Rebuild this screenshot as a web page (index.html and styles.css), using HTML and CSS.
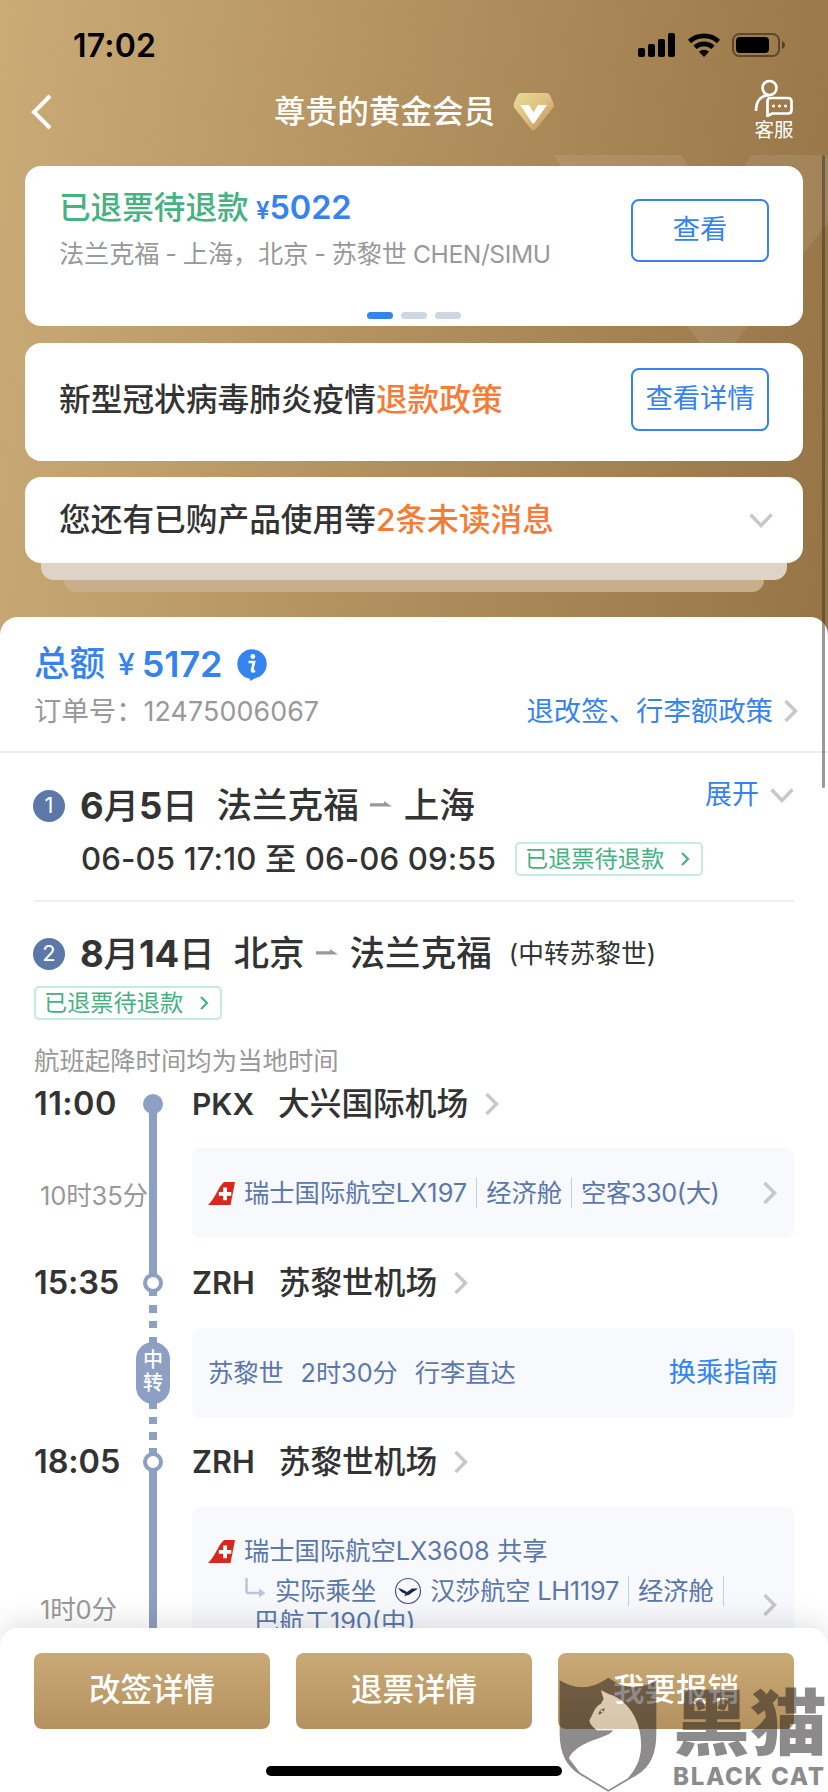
FILE: index.html
```html
<!DOCTYPE html>
<html lang="zh-CN">
<head>
<meta charset="utf-8">
<title>订单详情</title>
<link rel="stylesheet" href="styles.css">
</head>
<body>
<svg class="defs" width="0" height="0">
  <symbol id="right" viewBox="0 0 14 22"><path d="M1.5 1L11.5 11L1.5 21" fill="none" stroke="#c8c8c8" stroke-width="3.500"/></symbol>
  <symbol id="down" viewBox="0 0 24 15"><path d="M1.5 1.5L12 12.5L22.5 1.5" fill="none" stroke="#c8c8c8" stroke-width="3.500"/></symbol>
  <symbol id="tagright" viewBox="0 0 9 14"><path d="M1 1L7 7L1 13" fill="none" stroke="#45b280" stroke-width="2.200"/></symbol>
  <symbol id="arrow" viewBox="0 0 22 6"><path d="M0 2.2H14V0L22 5.6H0Z" fill="#999"/></symbol>
  <symbol id="swiss" viewBox="0 0 27 23"><path d="M16 0H27L22.500 23H0C7 17 10 5 16 0Z" fill="#d8271c"/><path d="M15.2 5.5H19V10H23.3V13.8H19V18.3H15.2V13.8H10.8V10H15.2Z" fill="#fff"/></symbol>
</svg>
<div class="screen">
  <svg class="bgv" width="275" height="188" viewBox="0 0 275 188"><path d="M0 0H129L163 67L198 0H275V67L182 188H147Z" fill="#fff" fill-opacity=".09"/></svg>
  <div class="status">
    <span class="clock">17:02</span>
    <svg width="148" height="26" viewBox="0 0 148 26">
      <rect x="0" y="16" width="7" height="9" rx="2"/><rect x="10" y="12" width="7" height="13" rx="2"/><rect x="20" y="7" width="7" height="18" rx="2"/><rect x="30" y="1" width="7" height="24" rx="2"/>
      <g fill="none" stroke="#000" stroke-width="4.6"><path d="M51.5 9.5C59.500 2 72.500 2 80.500 9.500"/><path d="M57 15.300C62 10.700 70 10.700 75 15.300"/></g>
      <path d="M61 19.700C64 17 68 17 71 19.700L66 25Z"/>
      <rect x="95" y="2" width="46" height="22" rx="6.500" fill="none" stroke="#000" stroke-opacity=".42" stroke-width="2"/>
      <rect x="98" y="5" width="33" height="16" rx="4"/><path d="M144 9V17C148 15.500 148 10.500 144 9Z" fill-opacity=".45"/>
    </svg>
  </div>
  <header class="nav">
    <svg width="22" height="36" viewBox="0 0 22 36"><path d="M19 2L3 18L19 34" fill="none" stroke="#fff" stroke-width="4"/></svg>
    <h1>尊贵的黄金会员</h1>
    <svg class="gem" width="42" height="40" viewBox="0 0 42 40">
      <defs><linearGradient id="gold" x1="0" y1="0" x2="1" y2="1"><stop offset="0" stop-color="#eadb94"/><stop offset=".5" stop-color="#dfc083"/><stop offset="1" stop-color="#bd8750"/></linearGradient></defs>
      <path d="M8 1H33Q36 1 37 3L40.500 11Q41.500 14 40 16L23 37Q20.500 40 18 37L1.500 16Q0 14 1 11L4.500 3Q5.500 1 8 1Z" fill="url(#gold)"/>
      <path d="M7 13H16L20.500 20.500L25 13H34L31 17L21 31.500H19.500L10 17Z" fill="#fff"/>
    </svg>
    <div class="service">
      <svg width="40" height="38" viewBox="0 0 40 38" fill="none" stroke="#fff" stroke-width="2.700"><circle cx="15.500" cy="9" r="7"/><path d="M2 32C2 21 8 16 15 16.500"/><path d="M16.500 19H34Q37.500 19 37.500 22.500V31Q37.500 34.500 34 34.500H18L13.500 37V22.500Q13.500 19 16.500 19Z"/><g fill="#fff" stroke="none"><circle cx="19.500" cy="27" r="1.500"/><circle cx="25.500" cy="27" r="1.500"/><circle cx="31.500" cy="27" r="1.500"/></g></svg>
      <span>客服</span>
    </div>
  </header>
  <section class="notices">
    <div class="card refund">
      <div class="row">
        <div>
          <div class="headline"><span class="green">已退票待退款</span> <b class="price"><small>¥</small>5022</b></div>
          <div class="route">法兰克福 - 上海，北京 - 苏黎世 <span class="pax">CHEN/SIMU</span></div>
        </div>
        <a class="btn">查看</a>
      </div>
      <div class="dots"><i class="on"></i><i></i><i></i></div>
    </div>
    <div class="card policy"><div class="msg">新型冠状病毒肺炎疫情<em>退款政策</em></div><a class="btn">查看详情</a></div>
    <div class="card unread"><div class="msg">您还有已购产品使用等<em>2条未读消息</em></div><svg width="24" height="15"><use href="#down"/></svg></div>
    <div class="under one"></div>
    <div class="under two"></div>
  </section>
  <main class="sheet">
    <div class="summary">
      <div class="total"><span>总额</span><span class="yen">¥</span><b>5172</b>
        <svg width="30" height="33" viewBox="0 0 30 33"><circle cx="15" cy="15" r="14.700" fill="#3583ee"/><path d="M12 28L13.500 32L20 28Z" fill="#3583ee"/><circle cx="15.800" cy="7.500" r="2.400" fill="#fff"/><path d="M11.500 13H17L15 21.500Q15 23 18 21.800" fill="none" stroke="#fff" stroke-width="2.700"/></svg>
      </div>
      <div class="order"><span class="no">订单号：<span class="digits">12475006067</span></span><a>退改签、行李额政策</a><svg width="14" height="22"><use href="#right"/></svg></div>
    </div>
    <section class="trip first">
      <div class="leg"><span class="badge">1</span><span class="date"><b>6</b>月<b>5</b>日</span><span class="city">法兰克福</span><svg class="arr" width="22" height="6"><use href="#arrow"/></svg><span>上海</span><a class="more">展开<svg width="24" height="15"><use href="#down"/></svg></a></div>
      <div class="when"><span class="time">06-05 17:10 至 06-06 09:55</span><span class="tag">已退票待退款<svg width="9" height="14"><use href="#tagright"/></svg></span></div>
    </section>
    <section class="trip second">
      <div class="leg"><span class="badge">2</span><span class="date"><b>8</b>月<b>14</b>日</span><span class="city">北京</span><svg class="arr" width="22" height="6"><use href="#arrow"/></svg><span>法兰克福</span><span class="via">(中转苏黎世)</span></div>
      <span class="tag">已退票待退款<svg width="9" height="14"><use href="#tagright"/></svg></span>
      <div class="local">航班起降时间均为当地时间</div>
    </section>
    <section class="timeline">
      <div class="stop start"><b class="hour">11:00</b><div class="track"><i class="dot"></i></div><div class="port"><b>PKX</b><span>大兴国际机场</span><svg width="14" height="22"><use href="#right"/></svg></div></div>
      <div class="flight"><span class="dur">10时35分</span><div class="track"></div>
        <div class="box"><svg width="27" height="23"><use href="#swiss"/></svg><span class="name">瑞士国际航空LX197</span><span class="sep">经济舱</span><span class="sep jet">空客330(大)</span><svg class="go" width="14" height="22"><use href="#right"/></svg></div></div>
      <div class="stop arrive"><b class="hour">15:35</b><div class="track"><i class="dot open"></i></div><div class="port"><b>ZRH</b><span>苏黎世机场</span><svg width="14" height="22"><use href="#right"/></svg></div></div>
      <div class="flight transfer"><span></span><div class="track"><span class="pill">中<br>转</span></div>
        <div class="box"><span class="tr">苏黎世</span><span class="tr">2时30分</span><span>行李直达</span><a class="go">换乘指南</a></div></div>
      <div class="stop depart"><b class="hour">18:05</b><div class="track"><i class="dot open"></i></div><div class="port"><b>ZRH</b><span>苏黎世机场</span><svg width="14" height="22"><use href="#right"/></svg></div></div>
      <div class="flight shared"><span class="dur">1时0分</span><div class="track"></div>
        <div class="box">
          <div class="lines">
            <div class="line"><svg width="27" height="23"><use href="#swiss"/></svg><span class="name">瑞士国际航空LX3608 共享</span></div>
            <div class="line actual"><svg width="21" height="20" viewBox="0 0 21 20"><path d="M1.500 0V13Q1.500 15 3.500 15H16" fill="none" stroke="#b9c5da" stroke-width="2.500"/><path d="M14 10.500L20.500 15L14 19.500Z" fill="#b9c5da"/></svg><span class="ride">实际乘坐</span>
              <svg width="28" height="28" viewBox="0 0 28 28"><circle cx="14" cy="14" r="12.500" fill="none" stroke="#4a5487" stroke-width="1.200"/><path d="M4 11C8 12 10 13 13 15L18 11.500H24L22 13L18 15.500C16 18 13 18 10 19.500L11.500 17C8 16 6 14 4 11Z" fill="#1b2754"/></svg>
              <span class="name lh">汉莎航空 LH1197</span><span class="sep">经济舱</span><span class="sep end"></span></div>
            <div class="line plane">巴航工190(中)</div>
          </div>
          <svg class="go" width="14" height="22"><use href="#right"/></svg>
        </div></div>
    </section>
  </main>
  <div class="scrollbar"></div>
  <footer class="bar">
    <div class="actions"><button>改签详情</button><button>退票详情</button><button>我要报销</button></div>
    <div class="home"></div>
  </footer>
  <div class="mark">
    <svg width="98" height="116" viewBox="56 170 294 348">
      <path fill-rule="evenodd" fill="#1e181c" fill-opacity=".5" d="M58 180Q130 225 204 172Q278 225 348 180V340C348 400 330 440 290 464L204 514L120 464C80 440 58 400 58 340ZM182 210L206 222C260 237 305 300 302 380C300 425 282 450 262 474L204 508L118 456L86 414C100 380 150 362 180 352C200 346 215 338 218 330L170 330C155 320 145 305 148 298C160 280 160 262 182 250L190 236Z"/>
      <path fill="#fff" fill-opacity=".48" d="M182 210L206 222C260 237 305 300 302 380C300 425 282 450 262 474L204 508L118 456L86 414C100 380 150 362 180 352C200 346 215 338 218 330L170 330C155 320 145 305 148 298C160 280 160 262 182 250L190 236Z"/>
      <path d="M174 283Q176 267 193 264Q192 280 174 283Z" fill="#6a563e"/><circle cx="185" cy="273" r="4" fill="#dac8ae"/>
    </svg>
    <div class="words"><div class="zh">黑猫</div><div class="en">BLACK CAT</div></div>
  </div>
</div>
</body>
</html>
```
FILE: styles.css
```css
* { box-sizing: border-box; }
body { margin: 0; font-family: Inter, "Noto Sans CJK SC", sans-serif; color: #333; }
svg { display: block; flex: none; }
.defs { position: absolute; }
b { font-weight: 600; }
em { font-style: normal; color: #f57c37; }
a { color: #3583ee; }
.screen { position: relative; width: 828px; height: 1792px; overflow: hidden; background: linear-gradient(97deg, #caab76 0, #b39260 45%, #967446 100%) 0 0 / 100% 650px no-repeat #fff; }
.bgv { position: absolute; left: 553px; top: 155px; }
.status { position: relative; height: 80px; padding: 32px 42px 0 73px; display: flex; justify-content: space-between; color: #000; }
.clock { font-size: 32px; font-weight: 600; line-height: 28px; letter-spacing: .2px; }
.nav { height: 86px; padding: 0 34px 22px 31px; display: flex; align-items: center; color: #fff; position: relative; }
.nav h1 { margin: 0 0 0 221px; font-size: 31.600px; font-weight: 500; line-height: 40px; white-space: nowrap; }
.gem { margin-left: 18px; }
.service { margin-left: auto; margin-top: -3px; display: flex; flex-direction: column; align-items: center; font-size: 19.500px; line-height: 26px; }
.notices { position: relative; padding: 0 25px; height: 451px; }
.card { background: #fff; border-radius: 16px; }
.refund { height: 160px; margin-bottom: 17px; padding: 22px 34px 0 34px; }
.row { display: flex; justify-content: space-between; height: 124px; }
.headline { font-size: 31.600px; line-height: 40px; white-space: nowrap; font-weight: 500; word-spacing: -1px; }
.green { color: #45b280; }
.price { color: #3583ee; font-size: 32.500px; letter-spacing: -.1px; }
.price small { font-size: 24px; }
.route { margin-top: 3px; font-size: 25.200px; line-height: 40px; color: #999; white-space: nowrap; letter-spacing: -.1px; word-spacing: -1px; }
.pax { font-size: 24.600px; letter-spacing: -.4px; }
.btn { width: 138px; height: 63px; flex: none; border: 2px solid #3583ee; border-radius: 8px; display: flex; align-items: center; justify-content: center; font-size: 27.300px; line-height: 30px; padding-bottom: 1px; }
.row .btn { margin-top: 11px; }
.dots { display: flex; justify-content: center; gap: 8px; }
.dots i { width: 26px; height: 7px; border-radius: 4px; background: #ced6e3; }
.dots .on { background: #3583ee; }
.policy { height: 118px; margin-bottom: 16px; padding: 25px 34px 0 34px; display: flex; justify-content: space-between; }
.msg { font-size: 31.700px; font-weight: 500; line-height: 64px; white-space: nowrap; }
.unread { height: 86px; padding: 0 30px 0 34px; display: flex; align-items: center; justify-content: space-between; }
.under { margin: 0 16px; height: 17px; background: #ddd4c6; border-radius: 0 0 13px 13px; }
.two { margin: 0 39px; height: 12px; background: #c8af8a; }
.sheet { position: relative; background: #fff; border-radius: 18px 18px 0 0; height: 1175px; }
.summary { height: 136px; border-bottom: 2px solid #eee; padding: 27px 30px 0 34px; }
.total { height: 40px; display: flex; align-items: center; color: #3583ee; font-size: 35.500px; font-weight: 500; line-height: 40px; }
.total b { font-size: 36px; letter-spacing: -.1px; }
.yen { font-size: 30px; margin: 0 7px 0 13px; }
.total svg { margin: 3px 0 0 15px; }
.order { height: 54px; display: flex; align-items: center; font-size: 27.400px; line-height: 40px; color: #999; }
.no { flex: 1; white-space: nowrap; }
.digits { font-size: 26.800px; letter-spacing: .1px; }
.order svg { margin-left: 11px; }
.trip { margin: 0 34px; font-weight: 500; }
.leg { height: 40px; display: flex; align-items: center; font-size: 35.600px; line-height: 40px; white-space: nowrap; }
.badge { width: 32px; height: 32px; border-radius: 50%; background: #5b78a9; color: #fff; font-size: 22px; font-weight: 400; line-height: 31px; text-align: center; margin: 0 15px 0 -1px; flex: none; }
.date { letter-spacing: -.2px; }
.date b { font-size: 36.500px; font-weight: 700; }
.city { margin-left: 19px; }
.arr { margin: 0 12px 4px 11px; }
.more { margin-left: auto; margin-bottom: 22px; display: flex; align-items: center; gap: 11px; font-size: 27px; font-weight: 400; line-height: 30px; }
.first { height: 149px; padding-top: 33px; border-bottom: 2px solid #eee; }
.when { display: flex; align-items: center; margin: 15px 0 0 47px; height: 36px; }
.time { width: 434px; font-size: 31.200px; line-height: 36px; letter-spacing: .12px; white-space: nowrap; }
.tag { width: 188px; height: 34px; border: 2px solid #c5ecdb; border-radius: 5px; display: flex; align-items: center; font-size: 23.200px; line-height: 30px; font-weight: 400; color: #45b280; padding-left: 8px; white-space: nowrap; }
.tag svg { margin-left: 17px; }
.second { height: 177px; padding-top: 32px; }
.via { font-size: 25.700px; font-weight: 400; margin-left: 17px; }
.second .tag { margin-top: 12px; }
.local { margin-top: 21px; font-size: 25.400px; line-height: 40px; font-weight: 400; color: #999; }
.timeline { margin: 0 34px; }
.stop, .flight { display: grid; grid-template-columns: 102px 34px 602px; column-gap: 0; height: 90px; align-items: center; }
.stop > .track, .flight > .track { align-self: stretch; display: flex; align-items: center; justify-content: center; background: linear-gradient(#8d9fc2, #8d9fc2) 13px 0 / 8px 100% no-repeat; }
.stop .port, .flight .box { margin-left: 22px; }
.hour { font-size: 32.500px; letter-spacing: -.1px; line-height: 48px; }
.start .hour { letter-spacing: .4px; }
.dot { width: 20px; height: 20px; border-radius: 50%; background: #8d9fc2; }
.open { background: #fff; border: 4px solid #8d9fc2; }
.port { display: flex; align-items: center; font-size: 31.700px; font-weight: 500; line-height: 48px; white-space: nowrap; }
.port b { font-size: 30.600px; margin-right: 24px; }
.start .port b { font-size: 30px; }
.port svg { margin-left: 17px; }
.stop.start { height: 69px; align-items: start; }
.start .hour { line-height: 50px; }
.start .port { height: 50px; }
.start > .track { height: 69px; padding-bottom: 19px; background-position: 13px 25px; }
.arrive > .track, .depart > .track { background: linear-gradient(#8d9fc2, #8d9fc2) 13px 0 / 8px 58px no-repeat, repeating-linear-gradient(#fff 0 8px, #8d9fc2 8px 16px) 13px 59px / 8px 31px no-repeat; }
.depart > .track { background: repeating-linear-gradient(#8d9fc2 0 8px, #fff 8px 16px) 13px -1px / 8px 32px no-repeat, linear-gradient(#8d9fc2, #8d9fc2) 13px 30px / 8px 60px no-repeat; }
.arrive, .transfer { height: 89.500px; }
.transfer > .track { background: repeating-linear-gradient(#fff 0 8px, #8d9fc2 8px 16px) 13px 1px / 8px 90px no-repeat; }
.dur { font-size: 25.600px; line-height: 40px; color: #999; padding-left: 6px; padding-top: 5px; white-space: nowrap; letter-spacing: -.2px; }
.box { height: 90px; width: 602px; border-radius: 8px; background: #f8f9fd; display: flex; align-items: center; padding: 0 17px 0 16px; font-size: 25.300px; line-height: 30px; color: #5b78a9; white-space: nowrap; }
.name { margin-left: 9px; }
.sep { border-left: 1px solid #c3cde0; padding-left: 9px; margin-left: 9px; }
.jet { letter-spacing: -.4px; }
.end { height: 30px; }
.go { margin-left: auto; }
.box a.go { font-size: 27.300px; margin-right: -1px; }
.tr { margin-right: 17px; letter-spacing: -.1px; }
.pill { width: 34px; height: 62px; border-radius: 17px; background: #8d9fc2; color: #fff; font-size: 20px; font-weight: 500; line-height: 23px; text-align: center; padding-top: 7px; }
.flight.shared { height: 204px; }
.shared .dur { padding-top: 1px; }
.shared .box { height: 204px; }
.lines { flex: 1; align-self: flex-start; padding-top: 24px; }
.line { display: flex; align-items: center; height: 40px; }
.actual { padding-left: 37px; height: 39px; }
.actual svg:first-child { margin-top: -5px; }
.actual .lh { letter-spacing: -.25px; margin-left: 8px; }
.ride { margin: 0 18px 0 9px; }
.plane { padding-left: 46px; height: 23px; }
.shared .go { margin: 0 0 9px; }
.scrollbar { position: absolute; left: 822px; top: 155px; width: 3px; height: 633px; border-radius: 2px; background: rgba(60,50,40,.5); }
.bar { position: absolute; left: 0; bottom: 0; width: 828px; height: 164px; background: #fff; border-radius: 18px 18px 0 0; box-shadow: 0 -4px 30px rgba(0,0,0,.13); padding: 25px 34px 0; }
.actions { display: grid; grid-template-columns: repeat(3, 1fr); gap: 26px; }
.actions button { height: 76px; border: 0; border-radius: 8px; background: linear-gradient(#c9a975, #b49260); color: #fff; font-family: inherit; font-size: 31.500px; font-weight: 500; line-height: 40px; padding: 0 0 3px; }
.home { width: 296px; height: 10px; border-radius: 5px; background: #000; margin: 37px auto 0; }
.mark { position: absolute; left: 559px; top: 1677px; display: flex; color: #1e181c; }
.words { opacity: .5; margin-left: 16px; }
.zh { font-family: "Noto Sans CJK SC", sans-serif; font-size: 77px; font-weight: 900; line-height: 84px; white-space: nowrap; transform: scaleY(.93); transform-origin: 0 40%; }
.en { font-size: 24px; font-weight: 800; line-height: 26px; margin-top: 3px; white-space: nowrap; letter-spacing: 1.700px; }
```
